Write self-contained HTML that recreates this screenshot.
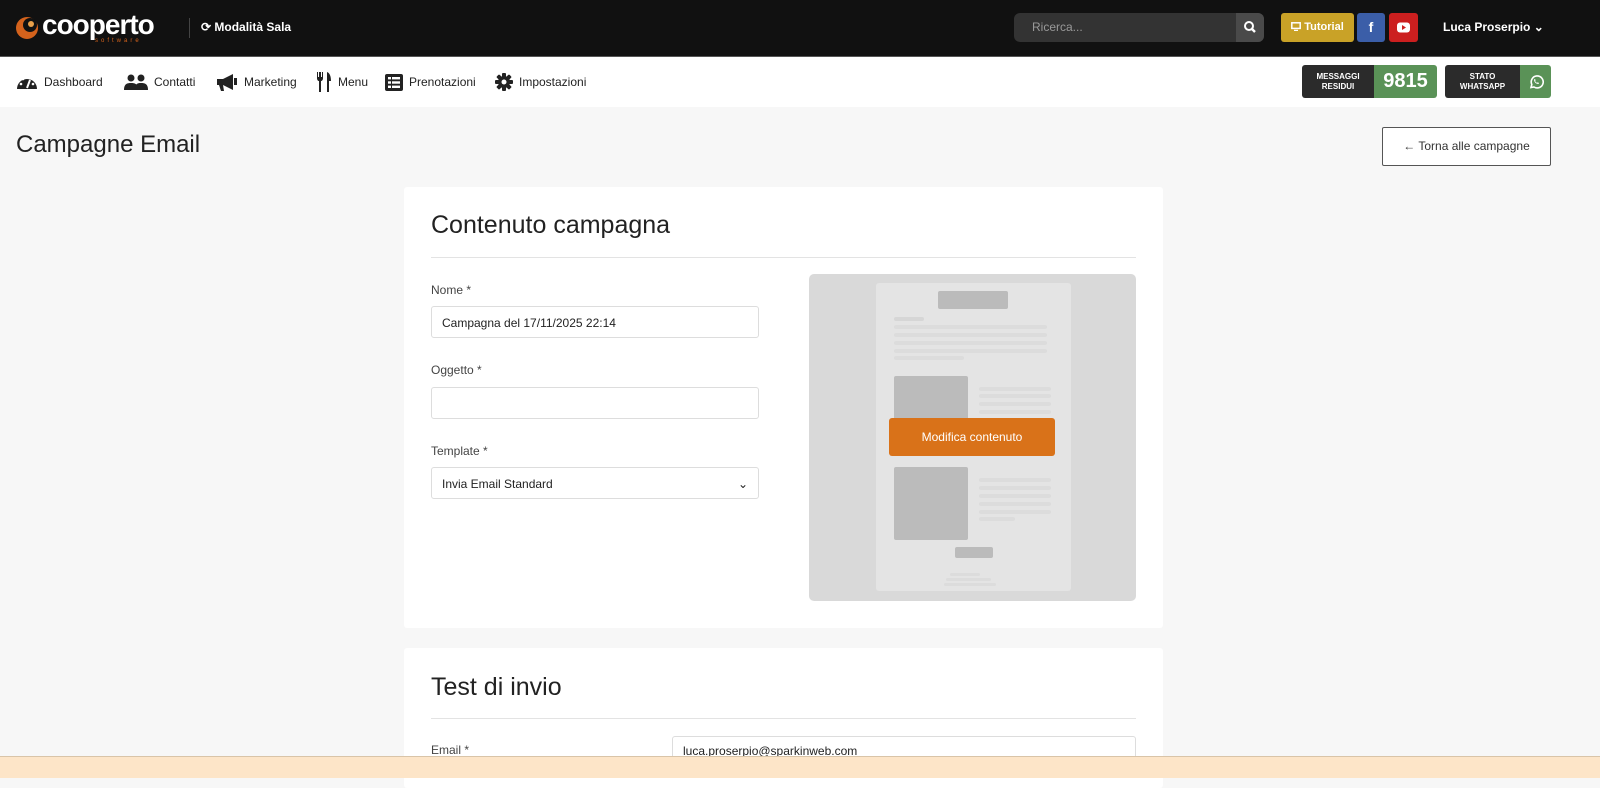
<!DOCTYPE html>
<html><head><meta charset="utf-8"><style>
*{box-sizing:border-box;margin:0;padding:0}
body{width:1600px;height:778px;overflow:hidden;background:#f7f7f7;font-family:"Liberation Sans",sans-serif;color:#222;position:relative}
.top{position:absolute;left:0;top:0;width:1600px;height:56px;background:#111}
.nav{position:absolute;left:0;top:56px;width:1600px;height:51px;background:#fff;border-top:1px solid #555}
.ab{position:absolute}
.navi{position:absolute;top:72px;font-size:12px;color:#222;display:flex;align-items:center;gap:6px;height:20px}
.navi svg{display:block}
.card{position:absolute;left:404px;width:759px;background:#fff;border-radius:3px}
.lbl{position:absolute;font-size:12px;color:#444}
.inp{position:absolute;left:431px;width:328px;height:32px;border:1px solid #ddd;border-radius:3px;background:#fff;font-size:12px;padding:9px 10px;color:#222}
.g{position:absolute;background:#bbb;border-radius:2px}
.l{position:absolute;background:#dcdcdc;height:4px;border-radius:2px}
</style></head><body>
<div class="top"></div>
<svg class="ab" style="left:14px;top:14px" width="26" height="26" viewBox="0 0 26 26"><circle cx="13" cy="14" r="11" fill="#d4621c"/><circle cx="16" cy="11" r="7" fill="#111"/><circle cx="17" cy="10" r="3" fill="#e9a04a"/></svg>
<div class="ab" style="left:42px;top:9px;font-size:28px;font-weight:bold;color:#fff;letter-spacing:-1px">cooperto</div>
<div class="ab" style="left:95px;top:38px;font-size:6px;color:#d4621c;letter-spacing:3px">software</div>
<div class="ab" style="left:189px;top:18px;width:1px;height:20px;background:#444"></div>
<div class="ab" style="left:201px;top:20px;font-size:12px;color:#fff;font-weight:bold">⟳ Modalità Sala</div>
<div class="ab" style="left:1014px;top:13px;width:250px;height:29px;background:#333;border-radius:6px"></div>
<div class="ab" style="left:1032px;top:20px;font-size:12px;color:#999">Ricerca...</div>
<div class="ab" style="left:1236px;top:13px;width:28px;height:29px;background:#4a4a4a;border-radius:0 6px 6px 0"><svg width="28" height="29" viewBox="0 0 28 29"><circle cx="13" cy="13" r="4" fill="none" stroke="#fff" stroke-width="2"/><path d="M16 16l3 3" stroke="#fff" stroke-width="2.4"/></svg></div>
<div class="ab" style="left:1281px;top:13px;width:73px;height:29px;background:#c9a227;border-radius:3px;color:#fff;font-size:11px;font-weight:bold;line-height:29px;text-align:center"><svg width="10" height="9" viewBox="0 0 10 9" style="vertical-align:-1px"><rect x="0.8" y="0.8" width="8.4" height="5.6" fill="none" stroke="#fff" stroke-width="1.5"/><path d="M3 8.5h4" stroke="#fff" stroke-width="1.5"/></svg> Tutorial</div>
<div class="ab" style="left:1357px;top:13px;width:28px;height:29px;background:#3b5ea8;border-radius:3px;color:#fff;font-size:14px;font-weight:bold;line-height:29px;text-align:center">f</div>
<div class="ab" style="left:1389px;top:13px;width:29px;height:29px;background:#cc1f1f;border-radius:3px"><svg width="29" height="29" viewBox="0 0 29 29"><rect x="8" y="9.5" width="13" height="10" rx="3" fill="#fff"/><path d="M13 12v5l4-2.5z" fill="#cc1f1f"/></svg></div>
<div class="ab" style="left:1443px;top:20px;font-size:12px;color:#fff;font-weight:bold">Luca Proserpio ⌄</div>
<div class="nav"></div>
<div class="navi" style="left:16px"><svg width="22" height="18" viewBox="0 0 22 18"><path d="M1 16A10 10 0 1 1 21 16z" fill="#222"/><path d="M11 15l3-8" stroke="#fff" stroke-width="2"/><circle cx="5" cy="11" r="1.3" fill="#fff"/><circle cx="7" cy="6" r="1.3" fill="#fff"/><circle cx="17" cy="11" r="1.3" fill="#fff"/></svg>Dashboard</div>
<div class="navi" style="left:124px"><svg width="24" height="16" viewBox="0 0 24 16"><circle cx="7" cy="4" r="3.5" fill="#222"/><circle cx="17" cy="4" r="3.5" fill="#222"/><path d="M0 16c0-6 3-7 7-7s7 1 7 7z" fill="#222"/><path d="M11 16c0-6 2-7 6-7s7 1 7 7z" fill="#222"/></svg>Contatti</div>
<div class="navi" style="left:216px"><svg width="22" height="18" viewBox="0 0 22 18"><path d="M1 6h6l10-5v16L7 12H1z" fill="#222"/><path d="M3 12l2 6h3l-1-6z" fill="#222"/><rect x="18" y="5" width="3" height="7" fill="#222"/></svg>Marketing</div>
<div class="navi" style="left:316px"><svg width="16" height="20" viewBox="0 0 16 20"><path d="M1 0v6c0 2 1 3 2 3v11h2V9c1 0 2-1 2-3V0H6v5H5V0H3v5H2V0z" fill="#222"/><path d="M11 20V0c3 1 4 5 4 9h-2v11z" fill="#222"/></svg>Menu</div>
<div class="navi" style="left:385px"><svg width="18" height="17" viewBox="0 0 18 17"><rect x="0" y="0" width="18" height="17" rx="2" fill="#222"/><rect x="3" y="3" width="3" height="2.4" fill="#fff"/><rect x="7" y="3" width="8" height="2.4" fill="#fff"/><rect x="3" y="7.3" width="3" height="2.4" fill="#fff"/><rect x="7" y="7.3" width="8" height="2.4" fill="#fff"/><rect x="3" y="11.6" width="3" height="2.4" fill="#fff"/><rect x="7" y="11.6" width="8" height="2.4" fill="#fff"/></svg>Prenotazioni</div>
<div class="navi" style="left:495px"><svg width="18" height="18" viewBox="0 0 18 18"><g fill="#222"><circle cx="9" cy="9" r="6"/><rect x="7" y="0" width="4" height="18" rx="1"/><rect x="0" y="7" width="18" height="4" rx="1"/><rect x="7" y="0" width="4" height="18" rx="1" transform="rotate(45 9 9)"/><rect x="7" y="0" width="4" height="18" rx="1" transform="rotate(-45 9 9)"/></g><circle cx="9" cy="9" r="2.5" fill="#fff"/></svg>Impostazioni</div>
<div class="ab" style="left:1302px;top:65px;width:135px;height:33px;border-radius:3px;overflow:hidden;display:flex">
<div style="width:72px;background:#2b2b2b;color:#fff;font-size:8px;font-weight:bold;text-align:center;padding-top:7px;line-height:10px">MESSAGGI<br>RESIDUI</div>
<div style="flex:1;background:#5a9257;color:#fff;font-size:20px;font-weight:bold;text-align:center;line-height:33px">9815</div></div>
<div class="ab" style="left:1445px;top:65px;width:106px;height:33px;border-radius:3px;overflow:hidden;display:flex">
<div style="width:75px;background:#2b2b2b;color:#fff;font-size:8px;font-weight:bold;text-align:center;padding-top:7px;line-height:10px">STATO<br>WHATSAPP</div>
<div style="flex:1;background:#5a9257;display:flex;align-items:center;justify-content:center"><svg width="16" height="16" viewBox="0 0 16 16"><path d="M3 13.5l.8-3A6 6 0 1 1 6 13z" fill="none" stroke="#fff" stroke-width="1.6"/><path d="M6 5.5c0 2.5 2 4.5 4.5 4.5l.5-1-1.3-.7-.6.6c-1-.4-1.6-1-2-2l.6-.6L7 5z" fill="#fff"/></svg></div></div>
<div class="ab" style="left:16px;top:131px;font-size:24px;color:#222">Campagne Email</div>
<div class="ab" style="left:1382px;top:127px;width:169px;height:39px;border:1px solid #555;border-radius:2px;background:#fff;font-size:12px;text-align:center;line-height:37px;color:#333">← Torna alle campagne</div>
<div class="card" style="top:187px;height:441px"></div>
<div class="ab" style="left:431px;top:211px;font-size:25px">Contenuto campagna</div>
<div class="ab" style="left:431px;top:257px;width:705px;height:1px;background:#e3e3e3"></div>
<div class="lbl" style="left:431px;top:283px">Nome *</div>
<div class="inp" style="top:306px">Campagna del 17/11/2025 22:14</div>
<div class="lbl" style="left:431px;top:363px">Oggetto *</div>
<div class="inp" style="top:387px"></div>
<div class="lbl" style="left:431px;top:444px">Template *</div>
<div class="inp" style="top:467px">Invia Email Standard<span style="float:right">⌄</span></div>
<div class="ab" style="left:809px;top:274px;width:327px;height:327px;background:#d9d9d9;border-radius:5px"></div>
<div class="ab" style="left:876px;top:283px;width:195px;height:308px;background:#e4e4e4;border-radius:3px"></div>
<div class="g" style="left:938px;top:291px;width:70px;height:18px"></div>
<div class="l" style="left:894px;top:317px;width:30px;background:#d6d6d6"></div>
<div class="l" style="left:894px;top:325px;width:153px"></div>
<div class="l" style="left:894px;top:333px;width:153px"></div>
<div class="l" style="left:894px;top:341px;width:153px"></div>
<div class="l" style="left:894px;top:349px;width:153px"></div>
<div class="l" style="left:894px;top:356px;width:70px"></div>
<div class="g" style="left:894px;top:376px;width:74px;height:50px"></div>
<div class="l" style="left:979px;top:387px;width:72px"></div>
<div class="l" style="left:979px;top:394px;width:72px"></div>
<div class="l" style="left:979px;top:402px;width:72px"></div>
<div class="l" style="left:979px;top:410px;width:72px"></div>
<div class="ab" style="left:889px;top:418px;width:166px;height:38px;background:#d97219;border-radius:3px;color:#fff;font-size:12px;text-align:center;line-height:38px">Modifica contenuto</div>
<div class="g" style="left:894px;top:467px;width:74px;height:73px"></div>
<div class="l" style="left:979px;top:478px;width:72px"></div>
<div class="l" style="left:979px;top:486px;width:72px"></div>
<div class="l" style="left:979px;top:494px;width:72px"></div>
<div class="l" style="left:979px;top:502px;width:72px"></div>
<div class="l" style="left:979px;top:510px;width:72px"></div>
<div class="l" style="left:979px;top:517px;width:36px"></div>
<div class="g" style="left:955px;top:547px;width:38px;height:11px"></div>
<div class="l" style="left:950px;top:573px;width:30px;height:3px"></div>
<div class="l" style="left:946px;top:578px;width:45px;height:3px"></div>
<div class="l" style="left:944px;top:583px;width:52px;height:3px"></div>
<div class="card" style="top:648px;height:140px"></div>
<div class="ab" style="left:431px;top:673px;font-size:25px">Test di invio</div>
<div class="ab" style="left:431px;top:718px;width:705px;height:1px;background:#e3e3e3"></div>
<div class="lbl" style="left:431px;top:743px">Email *</div>
<div class="ab" style="left:672px;top:736px;width:464px;height:32px;border:1px solid #ddd;border-radius:3px;font-size:12px;padding:7px 10px">luca.proserpio@sparkinweb.com</div>
<div class="ab" style="left:0;top:756px;width:1600px;height:22px;background:#fde5c8;border-top:1px solid #d9c4a8"></div>
</body></html>
